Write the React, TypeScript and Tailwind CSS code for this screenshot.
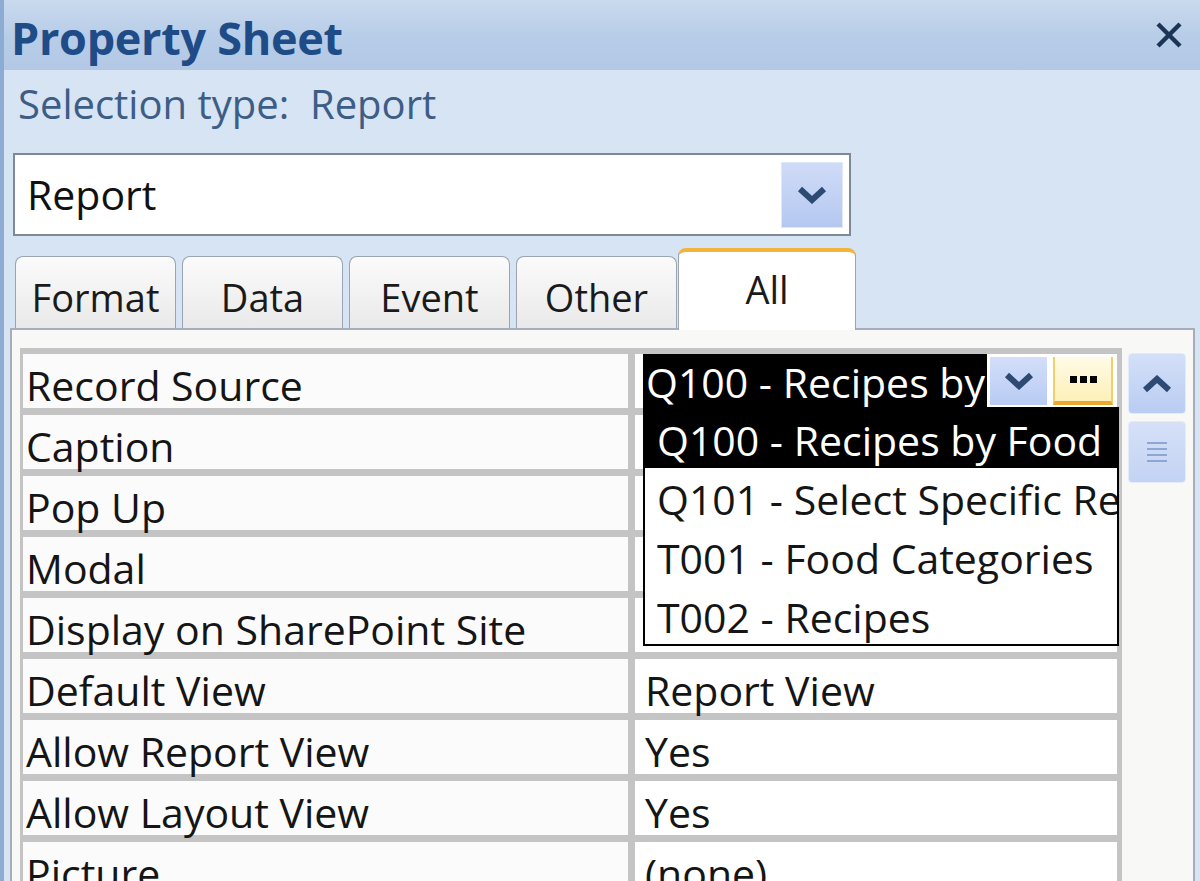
import React from "react";

const rows = [
  { label: "Record Source", value: "" },
  { label: "Caption", value: "" },
  { label: "Pop Up", value: "" },
  { label: "Modal", value: "" },
  { label: "Display on SharePoint Site", value: "" },
  { label: "Default View", value: "Report View" },
  { label: "Allow Report View", value: "Yes" },
  { label: "Allow Layout View", value: "Yes" },
  { label: "Picture", value: "(none)" },
];

const tabs = ["Format", "Data", "Event", "Other"];

const listItems = [
  "Q100 - Recipes by Food",
  "Q101 - Select Specific Recipes",
  "T001 - Food Categories",
  "T002 - Recipes",
];

function ChevronDown() {
  return (
    <svg width="30" height="18" viewBox="0 0 30 18">
      <polyline points="3,3 15,14 27,3" fill="none" stroke="#2d4a72" strokeWidth="6" />
    </svg>
  );
}

function ChevronUp() {
  return (
    <svg width="30" height="18" viewBox="0 0 30 18">
      <polyline points="3,15 15,4 27,15" fill="none" stroke="#2d4a72" strokeWidth="6" />
    </svg>
  );
}

export default function App() {
  return (
    <div className="relative w-[1200px] h-[881px] overflow-hidden bg-[#d6e4f3] border-l-4 border-[#8eabd3] font-['Open_Sans','Noto_Sans',sans-serif]">
      {/* title bar */}
      <div className="h-[70px] flex items-center justify-between pl-[7px] pr-[16px] bg-gradient-to-b from-[#cadaee] via-[#b8cde8] to-[#b2c8e5]">
        <span className="text-[45px] font-bold text-[#1f4b87] leading-none tracking-[-0.3px] pt-[4px]">Property Sheet</span>
        <svg width="30" height="28" viewBox="0 0 30 28">
          <line x1="4" y1="3" x2="26" y2="25" stroke="#1c3557" strokeWidth="4.5" />
          <line x1="26" y1="3" x2="4" y2="25" stroke="#1c3557" strokeWidth="4.5" />
        </svg>
      </div>

      <div className="h-[64px] pl-[14px] pt-[2px] text-[40px] leading-[64px] text-[#3d5d87] whitespace-pre">
        Selection type:  Report
      </div>

      {/* combo */}
      <div className="ml-[9px] mt-[19px] w-[838px] h-[83px] border-2 border-[#7d8998] bg-white flex items-center">
        <span className="flex-1 pl-[12px] text-[41px] text-[#111]">Report</span>
        <div className="w-[62px] h-[66px] mr-[6px] flex items-center justify-center bg-gradient-to-b from-[#cfdcf8] to-[#b5c8f0] border border-[#dfe8fa]">
          <ChevronDown />
        </div>
      </div>

      {/* tabs */}
      <div className="mt-[12px] h-[80px] flex items-end pl-[11px]">
        {tabs.map((t, i) => (
          <div
            key={t}
            className={
              "w-[161px] h-[72px] rounded-t-[8px] border border-b-0 border-[#9aa4b2] bg-gradient-to-b from-[#fbfbfb] to-[#e9e9e9] flex items-center justify-center pt-[10px] text-[38px] text-[#1a1a1a] " +
              (i === 3 ? "mr-[1px]" : "mr-[6px]")
            }
          >
            {t}
          </div>
        ))}
        <div className="relative z-10 -mb-[2px] w-[178px] h-[82px] rounded-t-[8px] border border-b-0 border-[#9aa4b2] border-t-[4px] border-t-[#f3b43c] bg-white flex items-start justify-center pt-[12px] text-[38px] leading-[50px] text-[#1a1a1a]">
          All
        </div>
      </div>

      {/* panel */}
      <div className="ml-[6px] w-[1185px] h-[560px] bg-[#f8f8f6] border-2 border-[#a5aeba] pt-[18px] pl-[8px] flex">
        <div className="relative w-[1102px] h-[560px] bg-[#c4c4c4] pt-[6px] pl-[3px] pr-[5px] flex flex-col gap-[7px]">
          {rows.map((r, i) => (
            <div key={r.label} className="h-[54px] flex gap-[7px] shrink-0">
              <div className="w-[605px] bg-[#fbfbfb] pl-[3px] pt-[4px] text-[41px] leading-[54px] text-[#151515] whitespace-nowrap">
                {r.label}
              </div>
              {i === 0 ? (
                <div className="flex-1 bg-white flex items-center pl-[8px]">
                  <div className="w-[344px] h-full bg-black pl-[3px] pt-[3px] text-[41px] leading-[50px] text-white whitespace-nowrap overflow-hidden">
                    Q100 - Recipes by Food
                  </div>
                  <div className="ml-[3px] w-[57px] h-[48px] flex items-center justify-center bg-gradient-to-b from-[#d3dffa] to-[#b9cbf3]">
                    <ChevronDown />
                  </div>
                  <div className="ml-[6px] w-[60px] h-[48px] flex items-center justify-center gap-[3px] bg-gradient-to-b from-[#fffbe6] to-[#fdf0b8] border-x-2 border-[#f2cf6a] border-b-4 border-b-[#eba731]">
                    <span className="w-[7px] h-[7px] bg-black" />
                    <span className="w-[7px] h-[7px] bg-black" />
                    <span className="w-[7px] h-[7px] bg-black" />
                  </div>
                </div>
              ) : (
                <div className="flex-1 bg-white pl-[10px] pt-[4px] text-[41px] leading-[54px] text-[#151515] whitespace-nowrap">
                  {r.value}
                </div>
              )}
            </div>
          ))}

          {/* open dropdown list */}
          <div className="absolute left-[623px] top-[59px] w-[476px] h-[239px] border-2 border-black bg-white overflow-hidden">
            {listItems.map((it, i) => (
              <div
                key={it}
                className={
                  "h-[59px] pl-[12px] pt-[3px] text-[41px] leading-[56px] whitespace-nowrap " +
                  (i === 0 ? "bg-black text-white" : "text-[#151515]")
                }
              >
                {it}
              </div>
            ))}
          </div>
        </div>

        {/* scrollbar */}
        <div className="ml-[6px] w-[58px] pt-[5px] flex flex-col gap-[7px]">
          <div className="h-[61px] rounded-[4px] border border-[#e3ebfa] bg-gradient-to-b from-[#d4e0f8] to-[#b9ccf2] flex items-center justify-center">
            <ChevronUp />
          </div>
          <div className="h-[62px] rounded-[4px] border border-[#e3ebfa] bg-gradient-to-b from-[#d6e1f8] to-[#c3d3f3] flex flex-col items-center justify-center gap-[4px]">
            <span className="w-[20px] h-[2px] bg-[#8ea6d3]" />
            <span className="w-[20px] h-[2px] bg-[#8ea6d3]" />
            <span className="w-[20px] h-[2px] bg-[#8ea6d3]" />
            <span className="w-[20px] h-[2px] bg-[#8ea6d3]" />
          </div>
        </div>
      </div>
    </div>
  );
}
